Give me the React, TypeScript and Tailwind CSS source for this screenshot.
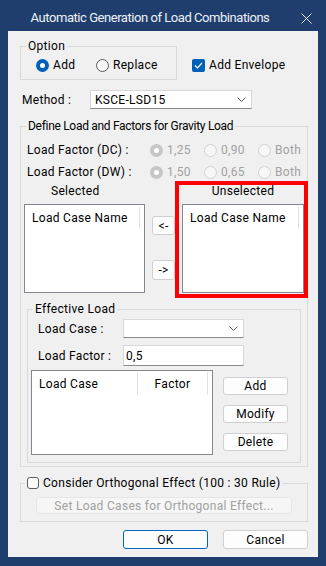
import React from "react";

function Radio({
  checked,
  disabled,
  label,
  className,
}: {
  checked?: boolean;
  disabled?: boolean;
  label: string;
  className?: string;
}) {
  let circle = "";
  if (checked && !disabled) circle = "bg-[#005fb8]";
  else if (checked && disabled) circle = "bg-[#c6c6c6]";
  else if (!checked && !disabled) circle = "border border-[#5d5d5d] bg-[#f6f6f6]";
  else circle = "border border-[#d2d2d2] bg-[#f7f7f7]";
  return (
    <div className={"flex items-center h-[14px] " + (className ?? "")}>
      <span
        className={
          "w-[13px] h-[13px] rounded-full flex items-center justify-center shrink-0 box-border " +
          circle
        }
      >
        {checked && <span className="w-[5px] h-[5px] rounded-full bg-white" />}
      </span>
      <span className={"ml-[4px] " + (disabled ? "text-[#a2a2a2]" : "text-black")}>{label}</span>
    </div>
  );
}

function Chevron() {
  return (
    <svg width="9" height="5" viewBox="0 0 9 5" className="shrink-0">
      <path d="M0.5 0.5 L4.5 4.5 L8.5 0.5" fill="none" stroke="#5a5a5a" strokeWidth="1" />
    </svg>
  );
}

function Btn({
  children,
  className,
}: {
  children: React.ReactNode;
  className?: string;
}) {
  return (
    <div
      className={
        "flex items-center justify-center rounded-[3px] border border-[#d0d0d0] bg-[#fdfdfd] text-black box-border " +
        (className ?? "")
      }
    >
      {children}
    </div>
  );
}

export default function App() {
  return (
    <div className="w-[326px] h-[566px] bg-[#1f3e6d] flex flex-col font-['Roboto',sans-serif] text-[12px] leading-[14px] tracking-[0.3px] text-black overflow-hidden">
      {/* Title bar */}
      <div className="h-[31px] flex items-center shrink-0">
        <div className="w-[300px] text-center text-[13px] leading-[16px] tracking-[-0.45px] text-[#eef1f6] pt-[5px]">
          Automatic Generation of Load Combinations
        </div>
        <svg width="11" height="11" viewBox="0 0 11 11" className="ml-[1px] mt-[6px]">
          <path d="M0.5 0.5 L10.5 10.5 M10.5 0.5 L0.5 10.5" stroke="#e8ecf2" strokeWidth="1" />
        </svg>
      </div>

      {/* Body */}
      <div className="ml-[8px] w-[310px] h-[526px] bg-[#f0f0f0] relative pl-[12px] pr-[10px] flex flex-col">
        {/* Row 1 */}
        <div className="mt-[8px] flex">
          <fieldset className="w-[157px] h-[41px] border border-[#d9d9d9] box-border">
            <legend className="ml-[5px] px-[2px]">Option</legend>
            <div className="mt-[5px] ml-[15px] flex">
              <Radio checked label="Add" className="w-[60px]" />
              <Radio label="Replace" />
            </div>
          </fieldset>
          <div className="ml-[15px] mt-[19px] flex items-center h-[14px]">
            <span className="w-[13px] h-[13px] rounded-[2px] bg-[#005fb8] flex items-center justify-center">
              <svg width="9" height="7" viewBox="0 0 9 7">
                <path d="M1 3.5 L3.5 6 L8 1" fill="none" stroke="white" strokeWidth="1.2" />
              </svg>
            </span>
            <span className="ml-[4px]">Add Envelope</span>
          </div>
        </div>

        {/* Method */}
        <div className="mt-[10px] flex items-center h-[19px]">
          <span className="ml-[2px] w-[68px]">Method :</span>
          <div className="w-[162px] h-[19px] bg-white border border-[#d8d8d8] border-b-[#8a8a8a] box-border flex items-center justify-between pl-[4px] pr-[5px]">
            <span>KSCE-LSD15</span>
            <Chevron />
          </div>
        </div>

        {/* Gravity group */}
        <fieldset className="mt-[10px] w-[288px] h-[348px] border border-[#d9d9d9] box-border">
          <legend className="ml-[5px] px-[2px] tracking-[-0.3px]">Define Load and Factors for Gravity Load</legend>
          <div className="mt-[10px] pl-[6px] flex items-center h-[14px]">
            <span className="w-[123px]">Load Factor (DC) :</span>
            <Radio checked disabled label="1,25" className="w-[54px]" />
            <Radio disabled label="0,90" className="w-[54px]" />
            <Radio disabled label="Both" />
          </div>
          <div className="mt-[8px] pl-[6px] flex items-center h-[14px]">
            <span className="w-[123px]">Load Factor (DW) :</span>
            <Radio checked disabled label="1,50" className="w-[54px]" />
            <Radio disabled label="0,65" className="w-[54px]" />
            <Radio disabled label="Both" />
          </div>

          <div className="mt-[5px] flex">
            <div className="ml-[3px] w-[121px] flex flex-col">
              <div className="h-[14px] pl-[27px]">Selected</div>
              <div className="mt-[6px] h-[89px] border border-[#828790] bg-white box-border">
                <div className="mt-[2px] w-[115px] h-[22px] border-r border-[#e3e3e3] flex items-center pl-[7px]">
                  Load Case Name
                </div>
              </div>
            </div>
            <div className="ml-[7px] w-[23px] flex flex-col">
              <Btn className="mt-[32px] h-[19px]">&lt;-</Btn>
              <Btn className="mt-[25px] h-[20px]">-&gt;</Btn>
            </div>
            <div className="ml-[7px] w-[122px] flex flex-col">
              <div className="h-[14px] text-center">Unselected</div>
              <div className="mt-[6px] h-[89px] border border-[#828790] bg-white box-border">
                <div className="mt-[2px] w-[116px] h-[22px] border-r border-[#e3e3e3] flex items-center pl-[7px]">
                  Load Case Name
                </div>
              </div>
            </div>
          </div>

          {/* Effective Load */}
          <fieldset className="mt-[9px] ml-[6px] w-[274px] h-[161px] border border-[#d9d9d9] box-border">
            <legend className="ml-[5px] px-[2px]">Effective Load</legend>
            <div className="mt-[3px] flex items-center h-[19px]">
              <span className="ml-[10px] w-[85px]">Load Case :</span>
              <div className="w-[121px] h-[19px] bg-white border border-[#d8d8d8] border-b-[#8a8a8a] box-border flex items-center justify-end pr-[5px]">
                <Chevron />
              </div>
            </div>
            <div className="mt-[7px] flex items-center h-[21px]">
              <span className="ml-[10px] w-[85px]">Load Factor :</span>
              <div className="w-[121px] h-[21px] bg-white border border-[#d8d8d8] border-b-[#8a8a8a] box-border flex items-center pl-[2px]">
                0,5
              </div>
            </div>
            <div className="mt-[4px] flex">
              <div className="ml-[3px] w-[182px] h-[85px] border border-[#828790] bg-white box-border flex items-start">
                <div className="mt-[1px] w-[106px] h-[23px] border-r border-[#e3e3e3] flex items-center pl-[7px]">
                  Load Case
                </div>
                <div className="mt-[1px] w-[70px] h-[23px] border-r border-[#e3e3e3] flex items-center justify-center">
                  Factor
                </div>
              </div>
              <div className="ml-[10px] w-[65px] flex flex-col">
                <Btn className="mt-[7px] h-[18px]">Add</Btn>
                <Btn className="mt-[10px] h-[18px]">Modify</Btn>
                <Btn className="mt-[10px] h-[18px]">Delete</Btn>
              </div>
            </div>
          </fieldset>
        </fieldset>

        {/* Orthogonal */}
        <fieldset className="mt-[9px] w-[288px] h-[46px] border border-[#d9d9d9] box-border">
          <legend className="ml-[4px] px-[2px]">
            <div className="flex items-center h-[14px]">
              <span className="w-[12px] h-[12px] rounded-[3px] border border-[#5d5d5d] bg-[#fbfbfb] box-border" />
              <span className="ml-[4px]">Consider Orthogonal Effect (100 : 30 Rule)</span>
            </div>
          </legend>
          <div className="mt-[7px] ml-[15px] w-[256px] h-[17px] rounded-[3px] border border-[#e6e6e6] bg-[#f6f6f6] box-border flex items-center justify-center text-[#a0a0a0]">
            Set Load Cases for Orthogonal Effect...
          </div>
        </fieldset>

        {/* OK / Cancel */}
        <div className="mt-[8px] flex justify-end gap-[15px]">
          <div className="w-[85px] h-[19px] rounded-[3px] border border-[#0067c0] bg-[#fdfdfd] box-border flex items-center justify-center">
            OK
          </div>
          <Btn className="w-[85px] h-[19px]">Cancel</Btn>
        </div>

        {/* Annotation highlight */}
        <div className="absolute left-[167px] top-[150px] w-[133px] h-[117px] border-4 border-[#ff0000] pointer-events-none box-border" />
      </div>
    </div>
  );
}
